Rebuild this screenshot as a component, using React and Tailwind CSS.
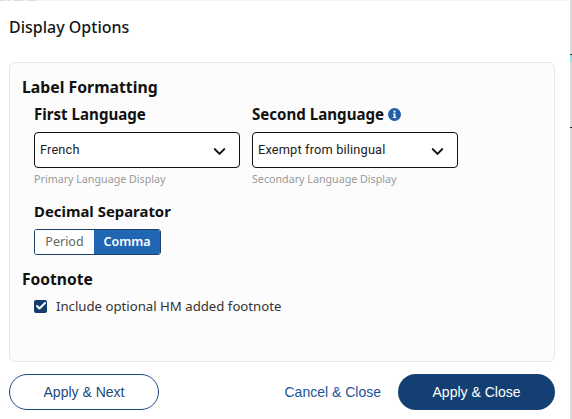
import React from "react";
import { ChevronDown, Check } from "lucide-react";

function Select({ value, width }) {
  return (
    <div className={`${width} h-[36px] bg-white border border-[#111] rounded-[4px] flex items-center justify-between pl-[5px] pr-[10px]`}>
      <span className="font-['Roboto',sans-serif] text-[12.8px] text-[#222] tracking-[0.15px] pb-[1px]">{value}</span>
      <ChevronDown size={19} strokeWidth={2.6} className="text-[#111] mt-[2px]" />
    </div>
  );
}

export default function App() {
  return (
    <div className="w-[572px] h-[419px] bg-white flex font-['Noto_Sans',sans-serif] overflow-hidden">
      <div className="w-[570px] h-full flex flex-col px-[9px]">
        <div className="h-[1px] -mx-[9px] flex bg-[#f5f5f5]">
          <div className="w-[5px] bg-[#dcdcdc]" />
          <div className="w-[4px] ml-[2px] bg-[#dcdcdc]" />
          <div className="w-[9px] ml-[3px] bg-[#dcdcdc]" />
          <div className="w-[10px] ml-[4px] bg-[#dcdcdc]" />
        </div>
        <h1 className="text-[16px] leading-[22px] font-medium text-[#161616] mt-[15px]">Display Options</h1>
        <div className="mt-[24px] w-[546px] h-[300px] bg-[#fcfcfc] border border-[#e6e6e6] rounded-[6px] pl-[12px] pt-[12px]">
          <h2 className="text-[15.8px] leading-[24px] font-bold text-[#111]">Label Formatting</h2>
          <div className="pl-[12px] flex gap-[12px] mt-[4px]">
            <div>
              <div className="text-[15.1px] leading-[22px] font-bold text-[#111] mb-[7px]">First Language</div>
              <Select value="French" width="w-[206px]" />
              <div className="text-[10.7px] leading-[14px] text-[#999] mt-[4px]">Primary Language Display</div>
            </div>
            <div>
              <div className="text-[15.1px] leading-[22px] font-bold text-[#111] mb-[7px] flex items-center gap-[4px]">
                Second Language
                <svg width="13" height="13" viewBox="0 0 13 13">
                  <circle cx="6.5" cy="6.5" r="6.5" fill="#1f5fa8" />
                  <rect x="5.6" y="2.6" width="1.9" height="1.9" fill="#fff" />
                  <path d="M4.9 5.5h2.6v3.4h.8v1H4.8v-1h.9V6.5h-.8z" fill="#fff" />
                </svg>
              </div>
              <Select value="Exempt from bilingual" width="w-[206px]" />
              <div className="text-[10.7px] leading-[14px] text-[#999] mt-[4px]">Secondary Language Display</div>
            </div>
          </div>
          <div className="pl-[12px] mt-[15px]">
            <div className="text-[14.9px] leading-[20px] font-bold text-[#111] mb-[8px]">Decimal Separator</div>
            <div className="flex w-[127px] h-[26px] rounded-[3px] border border-[#1c3f6b] overflow-hidden text-[12.5px]">
              <div className="w-[59px] flex items-center justify-center bg-white text-[#666]">Period</div>
              <div className="flex-1 flex items-center justify-center bg-[#2166b3] text-white font-semibold">Comma</div>
            </div>
          </div>
          <h2 className="text-[15.6px] leading-[24px] font-bold text-[#111] mt-[12px]">Footnote</h2>
          <div className="pl-[12px] flex items-center gap-[9px] mt-[6px]">
            <div className="w-[13px] h-[13px] rounded-[2px] bg-[#143d6e] flex items-center justify-center">
              <Check size={12} strokeWidth={4} className="text-white" />
            </div>
            <span className="text-[13.2px] leading-[18px] text-[#333]">Include optional HM added footnote</span>
          </div>
        </div>
        <div className="mt-[12px] w-[546px] flex items-center font-['Liberation_Sans',sans-serif]">
          <button className="w-[150px] h-[36px] rounded-full border border-[#1c4a80] bg-white text-[14px] text-[#1c4a80]">Apply &amp; Next</button>
          <span className="ml-auto text-[14px] text-[#1c5499]">Cancel &amp; Close</span>
          <button className="ml-[17px] w-[157px] h-[36px] rounded-full bg-[#143f72] text-[14px] text-white">Apply &amp; Close</button>
        </div>
      </div>
      <div className="w-[2px] h-full bg-[#dcdcdc] flex flex-col">
        <div className="h-[1px] mt-[54px] bg-[#3a2a1a]" />
        <div className="h-[7px] bg-[#9fe3ea]" />
        <div className="h-[1px] mt-[65px] bg-[#222]" />
      </div>
    </div>
  );
}
